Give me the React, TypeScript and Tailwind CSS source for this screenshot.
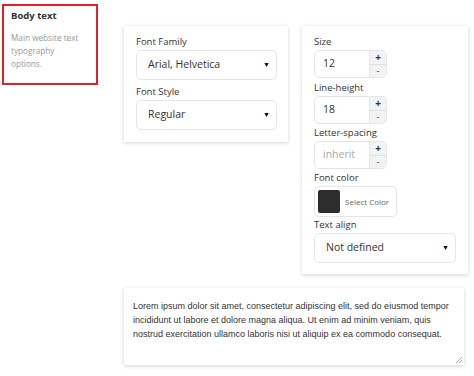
import React from 'react';

const Label: React.FC<{ children: React.ReactNode }> = ({ children }) => (
  <div className="text-[9.5px] leading-[13px] text-[#333] mt-[1px] mb-[2px]">{children}</div>
);

const Select: React.FC<{ value: string; w: string }> = ({ value, w }) => (
  <div
    className={`${w} h-[30px] flex items-center justify-between rounded-[5px] border border-[#e6e6e6] bg-white pl-[11px] pr-[6px] text-[10.5px] text-[#333]`}
  >
    <span>{value}</span>
    <span className="text-[7px] text-black">▼</span>
  </div>
);

const Spinner: React.FC<{ value: string; muted?: boolean }> = ({ value, muted }) => (
  <div className="w-[73px] h-[28px] flex rounded-[5px] border border-[#e6e6e6] bg-white overflow-hidden">
    <div className={`flex-1 flex items-center pl-[8px] text-[10.5px] ${muted ? 'text-[#aaa]' : 'text-[#333]'}`}>
      {value}
    </div>
    <div className="w-[17px] flex flex-col border-l border-[#e6e6e6] bg-[#f3f3f3] text-[#333]">
      <div className="flex-1 flex items-center justify-center text-[10px] font-bold leading-none border-b border-[#e0e0e0]">+</div>
      <div className="flex-1 flex items-center justify-center text-[9px] leading-none">-</div>
    </div>
  </div>
);

const App: React.FC = () => {
  return (
    <div
      className="w-[474px] h-[376px] bg-white flex"
      style={{ fontFamily: '"Open Sans", sans-serif' }}
    >
      {/* Section description */}
      <div className="w-[122px] pl-[2px] pt-[4px] shrink-0">
        <div className="w-[96px] h-[81px] border-2 border-[#e0202a] px-[7px] pt-[3px]">
          <div className="text-[9.5px] font-bold text-[#333] leading-[13px]">Body text</div>
          <div className="mt-[9px] w-[72px] text-[8.2px] leading-[13px] text-[#999]">
            Main website text typography options.
          </div>
        </div>
      </div>

      {/* Settings */}
      <div className="pt-[26px] pl-[2px] flex flex-col">
        <div className="flex items-start gap-[14px]">
          <div className="w-[164px] bg-white shadow-[0_1px_4px_rgba(0,0,0,0.18)] px-[12px] pt-[8px] pb-[12px]">
            <Label>Font Family</Label>
            <Select value="Arial, Helvetica" w="w-[141px]" />
            <div className="h-[4px]" />
            <Label>Font Style</Label>
            <Select value="Regular" w="w-[141px]" />
          </div>

          <div className="w-[166px] bg-white shadow-[0_1px_4px_rgba(0,0,0,0.18)] px-[12px] pt-[8px] pb-[11px]">
            <Label>Size</Label>
            <Spinner value="12" />
            <div className="h-[2px]" />
            <Label>Line-height</Label>
            <Spinner value="18" />
            <div className="h-[1px]" />
            <Label>Letter-spacing</Label>
            <Spinner value="inherit" muted />
            <div className="h-[1px]" />
            <Label>Font color</Label>
            <div className="w-[83px] h-[31px] flex items-center rounded-[5px] border border-[#e6e6e6] bg-white pl-[3px]">
              <div className="w-[22px] h-[23px] bg-[#2d2d2d] rounded-[2px]" />
              <span className="ml-[5px] text-[8px] text-[#666]">Select Color</span>
            </div>
            <Label>Text align</Label>
            <Select value="Not defined" w="w-[142px]" />
          </div>
        </div>

        {/* Sample text */}
        <div
          className="relative mt-[14px] w-[340px] h-[77px] bg-white shadow-[0_1px_4px_rgba(0,0,0,0.18)] px-[9px] pt-[11px] text-[9px] leading-[14px] text-[#333]"
          style={{ fontFamily: '"Liberation Sans", Arial, sans-serif' }}
        >
          Lorem ipsum dolor sit amet, consectetur adipiscing elit, sed do eiusmod tempor incididunt ut labore et dolore magna aliqua. Ut enim ad minim veniam, quis nostrud exercitation ullamco laboris nisi ut aliquip ex ea commodo consequat.
          <svg className="absolute right-[2px] bottom-[2px]" width="6" height="6" viewBox="0 0 6 6">
            <path d="M6 0 L0 6 M6 3 L3 6" stroke="#999" strokeWidth="0.8" />
          </svg>
        </div>
      </div>
    </div>
  );
};

export default App;
